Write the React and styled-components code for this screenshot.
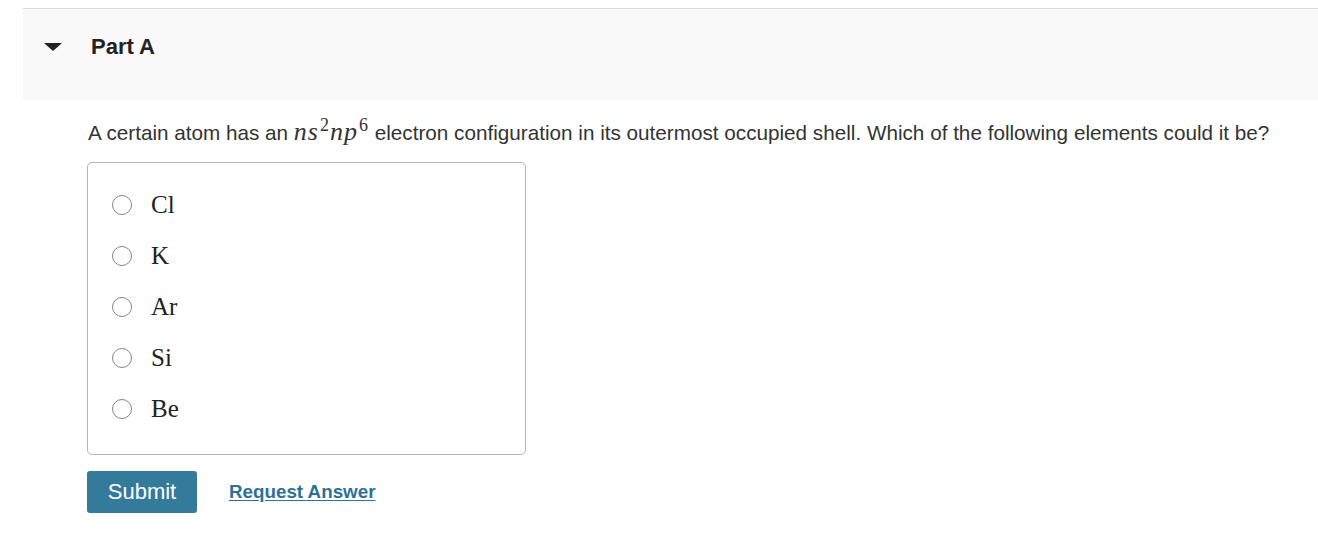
import styled, { createGlobalStyle } from 'styled-components';

const GlobalStyle = createGlobalStyle`
  body {
    margin: 0;
    background: #fff;
    font-family: "Liberation Sans", Arial, sans-serif;
    color: #333;
  }
`;

const options = ['Cl', 'K', 'Ar', 'Si', 'Be'];

const App = () => {
  return (
    <Page>
      <GlobalStyle />
      <Header>
        <Caret />
        <PartTitle>Part A</PartTitle>
      </Header>
      <Body>
        <Question>
          A certain atom has an{' '}
          <Math>
            <i>ns</i>
            <sup>2</sup>
            <i>np</i>
            <sup>6</sup>
          </Math>{' '}
          electron configuration in its outermost occupied shell. Which of the following elements could it be?
        </Question>
        <Choices>
          {options.map((opt) => (
            <Choice key={opt}>
              <Radio />
              <ChoiceLabel>{opt}</ChoiceLabel>
            </Choice>
          ))}
        </Choices>
        <Actions>
          <SubmitButton>Submit</SubmitButton>
          <RequestLink href="#">Request Answer</RequestLink>
        </Actions>
      </Body>
    </Page>
  );
};

const Page = styled.div`
  padding-top: 8px;
  padding-left: 23px;
`;

const Header = styled.div`
  display: flex;
  align-items: center;
  height: 92px;
  border-top: 1px solid #dcdcdc;
  background: #f9f9f9;
  padding-bottom: 16px;
  box-sizing: border-box;
`;

const Caret = styled.span`
  width: 0;
  height: 0;
  margin-left: 21px;
  border-left: 9px solid transparent;
  border-right: 9px solid transparent;
  border-top: 8px solid #222;
`;

const PartTitle = styled.h2`
  margin: 0 0 0 29px;
  font-size: 22px;
  font-weight: bold;
  color: #222;
`;

const Body = styled.div`
  padding: 18px 0 0 65px;
`;

const Question = styled.p`
  margin: 0;
  font-size: 20.7px;
  line-height: 28px;
  color: #333;
  white-space: nowrap;
`;

const Math = styled.span`
  font-family: "Liberation Serif", "DejaVu Serif", serif;
  font-size: 26px;
  letter-spacing: 1px;

  i {
    font-style: italic;
  }

  sup {
    font-size: 18px;
    font-style: normal;
    vertical-align: 9px;
    line-height: 0;
    margin-left: 1px;
  }
`;

const Choices = styled.div`
  width: 439px;
  height: 293px;
  box-sizing: border-box;
  margin: 15px 0 0 -1px;
  border: 1px solid #b5b5b5;
  border-radius: 5px;
  padding: 27px 0 0 24px;
  display: flex;
  flex-direction: column;
  gap: 21px;
`;

const Choice = styled.label`
  display: flex;
  align-items: center;
  height: 30px;
`;

const Radio = styled.span`
  width: 20px;
  height: 20px;
  box-sizing: border-box;
  border: 1.5px solid #858585;
  border-radius: 50%;
  background: #fff;
`;

const ChoiceLabel = styled.span`
  margin-left: 19px;
  font-family: "Liberation Serif", "DejaVu Serif", serif;
  font-size: 25px;
  color: #222;
`;

const Actions = styled.div`
  display: flex;
  align-items: center;
  margin: 16px 0 0 -1px;
  gap: 32px;
`;

const SubmitButton = styled.button`
  width: 110px;
  height: 42px;
  border: none;
  border-radius: 3px;
  background: #347a9b;
  color: #fff;
  font-family: "Liberation Sans", Arial, sans-serif;
  font-size: 22px;
  cursor: pointer;
`;

const RequestLink = styled.a`
  color: #2d7198;
  font-size: 18.8px;
  font-weight: bold;
  text-decoration: underline;
  text-underline-offset: 2px;
`;

export default App;
